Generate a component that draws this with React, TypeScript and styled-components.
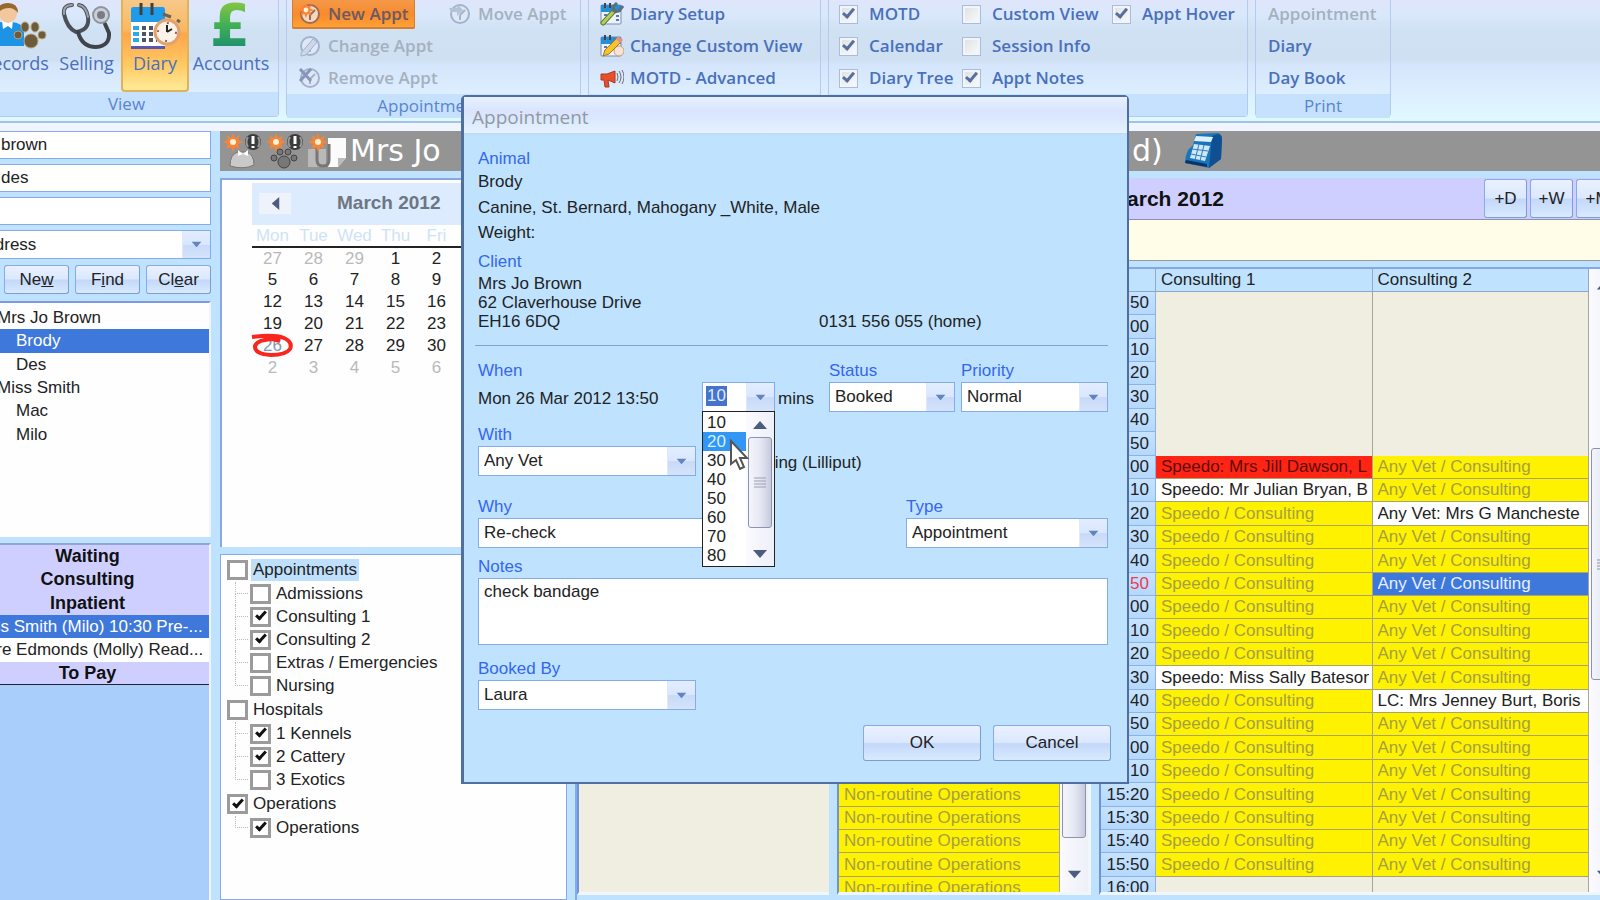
import React from 'react';
import styled, { createGlobalStyle, css } from 'styled-components';

const sans = `'Liberation Sans', Arial, sans-serif`;
const ribbonFont = `'Open Sans', 'Noto Sans', sans-serif`;

const color = {
  sky: '#bfe3ff',
  line: '#86aaf0',
  navy: '#4f6fa3',
  select: '#3f78db',
  lilac: '#cfcfff',
  beige: '#f0ede1',
  yellow: '#fff200',
  label: '#3566f0',
  ribbonText: '#4a70bc',
};

const GlobalStyle = createGlobalStyle`
  *, *::before, *::after { box-sizing: border-box; }
  html, body { margin: 0; overflow: hidden; }
  body { font: 17px/20px ${sans}; color: #222; background: ${color.sky}; }
  button, input, select, textarea { font: inherit; color: inherit; margin: 0; padding: 0; border: 0; background: none; }
  ul { list-style: none; margin: 0; padding: 0; }
  h1, h2, p { margin: 0; font: inherit; }
`;

/* Rows average a little over 23px: two rows in every five are one pixel taller. */
const rowRhythm = css`
  height: 23px;
  &:nth-child(5n + 2), &:nth-child(5n + 5) { height: 24px; }
`;

const Page = styled.div`
  position: relative;
  height: 100vh;
  display: flex;
  flex-direction: column;
  overflow: hidden;
`;

/* ---------- Ribbon ---------- */

const Ribbon = styled.header`
  display: flex;
  gap: 7px;
  height: 125px;
  margin-top: -2px;
  flex: none;
  font-family: ${ribbonFont};
  font-weight: 500;
  color: ${color.ribbonText};
  background: linear-gradient(#e0e5fc 0, #dae8fb 16px, #cfe1f3 34px, #cfe0f2 62px, #d5e5fb 66px, #dceeff 94px, #dffaff 122px);
  border-bottom: 2px solid #a3c2e8;
`;

const GroupBox = styled.section<{ $w: number; $lead?: boolean }>`
  width: ${p => p.$w}px;
  height: 119px;
  flex: none;
  display: flex;
  flex-direction: column;
  margin-left: ${p => (p.$lead ? '-40px' : '0')};
  border: 1px solid #b3cbec;
  border-top: 0;
  border-radius: 0 0 4px 4px;
  h2 { padding-left: ${p => (p.$lead ? '14px' : '0')}; }
`;

const GroupBody = styled.div<{ $cols: string; $pad: number }>`
  height: 96px;
  display: grid;
  grid-template-columns: ${p => p.$cols};
  grid-auto-rows: 32px;
  padding-left: ${p => p.$pad}px;
  align-items: center;
  justify-content: start;
  white-space: nowrap;
  font-weight: 600;
`;

const GroupCaption = styled.h2`
  flex: 1;
  background: #c5e1fd;
  text-align: center;
  line-height: 24px;
  color: #5b84d0;
`;

const BigButtons = styled.div`
  display: flex;
  height: 96px;
  padding-left: 17px;
`;

const BigButton = styled.button<{ $w: number; $active?: boolean }>`
  width: ${p => p.$w}px;
  display: flex;
  flex-direction: column;
  align-items: center;
  padding-top: 4px;
  font-size: 18px;
  line-height: 22px;
  border-radius: 0 0 4px 4px;
  ${p => p.$active && css`
    background: linear-gradient(#f7c98c 0, #fbb862 32px, #ffa54a 36px, #ffc862 66px, #fff0a0 96px);
    box-shadow: inset 0 0 0 2px #e0b25c;
  `}
  svg { margin-bottom: 2px; }
`;

const Command = styled.button<{ $hot?: boolean }>`
  display: flex;
  align-items: center;
  justify-self: start;
  gap: 6px;
  height: 30px;
  padding: 0 6px;
  border-radius: 2px;
  &:disabled { color: #a6b0bf; }
  ${p => p.$hot && css`
    color: #6b5a66;
    background: linear-gradient(#f49a4c, #f98a2c 50%, #ffa436);
    box-shadow: inset 0 -1px 0 1px #cf8035;
  `}
`;

const RibbonCheck = styled.label`
  display: flex;
  align-items: center;
  gap: 11px;
  input {
    appearance: none;
    width: 19px;
    height: 19px;
    border: 1px solid #a9bddb;
    background: linear-gradient(135deg, #dcdfe4, #fbfbfb);
    box-shadow: inset 0 0 0 2px #f1f4f8;
    display: grid;
    place-items: center;
  }
  input:checked::after {
    content: '';
    width: 7px;
    height: 12px;
    margin-top: -4px;
    border: solid #55709c;
    border-width: 0 3px 3px 0;
    transform: rotate(40deg);
  }
`;

/* ---------- Work area ---------- */

const Work = styled.main`
  flex: 1;
  min-height: 0;
  display: flex;
  gap: 9px;
  border-top: 8px solid #eff4ff;
`;

const Sidebar = styled.aside`
  width: 239px;
  flex: none;
  margin-left: -28px;
  display: flex;
  flex-direction: column;
`;

const SearchForm = styled.form`
  display: flex;
  flex-direction: column;
  gap: 5px;
  padding-bottom: 7px;
`;

const SearchInput = styled.input`
  height: 28px;
  padding-left: 28px;
  border: 1px solid ${color.line};
  background: #fff;
`;

const glossy = css`
  background: linear-gradient(#eaf1ff 0, #dbe8ff 48%, #c3d8f9 52%, #d9eaff 100%);
  border: 1px solid ${color.line};
  border-right-color: #7d9dcb;
  border-bottom-color: #7d9dcb;
  border-radius: 3px;
`;

const FormButtons = styled.div`
  display: flex;
  justify-content: flex-end;
  gap: 6px;
  padding-top: 1px;
`;

const FormButton = styled.button`
  ${glossy}
  width: 65px;
  height: 29px;
`;

const ClientList = styled.ul`
  height: 236px;
  flex: none;
  background: #fefeff;
  border-top: 2px solid #7b9bdc;
  border-right: 2px solid #eff4ff;
  padding-top: 3px;
`;

const ClientRow = styled.li<{ $pet?: boolean; $on?: boolean }>`
  ${rowRhythm}
  line-height: 23px;
  padding-left: ${p => (p.$pet ? 44 : 25)}px;
  ${p => p.$on && css`background: ${color.select}; color: #fff;`}
`;

const Queue = styled.ul`
  flex: 1;
  margin-top: 6px;
  border-top: 2px solid #92a6d8;
  border-right: 2px solid #eff4ff;
  background: #a9cefb;
  overflow: hidden;
`;

const QueueRow = styled.li<{ $kind: 'head' | 'on' | 'plain' }>`
  ${rowRhythm}
  line-height: 23px;
  white-space: nowrap;
  padding-left: 2px;
  &:last-child { border-bottom: 1px solid #223; }
  ${p => p.$kind === 'head' && css`
    background: ${color.lilac};
    color: #111;
    font-weight: bold;
    font-size: 18px;
    text-align: center;
    padding-left: 28px;
    padding-right: 34px;
  `}
  ${p => p.$kind === 'on' && css`background: ${color.select}; color: #fff;`}
  ${p => p.$kind === 'plain' && css`background: #fff; padding-left: 0; text-indent: -5px;`}
`;

const Content = styled.div`
  flex: 1;
  min-width: 0;
  margin-right: -17px;
  display: flex;
  flex-direction: column;
`;

const ClientBar = styled.div`
  height: 40px;
  flex: none;
  display: flex;
  align-items: center;
  padding-left: 4px;
  background: #949494;
  color: #fff;
  font-family: 'DejaVu Sans', Verdana, sans-serif;
  font-size: 30px;
  line-height: 42px;
  svg { flex: none; }
`;

const BarName = styled.span`
  width: 786px;
  padding-left: 4px;
`;

const BarEnd = styled.span`
  width: 52px;
`;

const Panes = styled.div`
  flex: 1;
  min-height: 0;
  display: flex;
  gap: 8px;
`;

const CalendarColumn = styled.div`
  width: 347px;
  flex: none;
  display: flex;
  flex-direction: column;
  gap: 7px;
  padding-top: 7px;
`;

const CalendarBox = styled.section`
  height: 369px;
  flex: none;
  background: #fefeff;
  border: 2px solid #8aa6e0;
  border-right-color: #eff4ff;
  border-bottom: 0;
  padding: 3px 0 0 30px;
`;

const MonthBar = styled.div`
  height: 42px;
  display: flex;
  align-items: center;
  background: #dcebfe;
  padding: 0 0 2px 7px;
  color: #6d7682;
  font-weight: bold;
  font-size: 19px;
`;

const PrevButton = styled.button`
  width: 32px;
  height: 21px;
  background: #eef2fb;
  display: grid;
  place-items: center;
  margin-right: 46px;
`;

const MonthTable = styled.table`
  table-layout: fixed;
  width: 287px;
  border-collapse: collapse;
  text-align: center;
  th { font-weight: normal; color: #cfe3f7; height: 22px; padding: 0; border-bottom: 2px solid #222; }
  td { height: 22px; padding: 0; }
`;

const Day = styled.td<{ $dim?: boolean }>`
  color: ${p => (p.$dim ? '#b9b9b9' : '#222')};
`;

const Ringed = styled.span`
  position: relative;
  color: #8299b5;
  svg { position: absolute; left: -12px; top: -3px; }
`;

const TreeBox = styled.section`
  flex: 1;
  background: #fefeff;
  border: 1px solid ${color.line};
  padding: 3px 0 0 6px;
`;

const TreeBranch = styled.ul`
  margin: 0 0 1px 8px;
`;

const TreeLeaf = styled.li`
  position: relative;
  padding-left: 15px;
  height: 23px;
  &::before {
    content: '';
    position: absolute;
    left: 0;
    top: 0;
    width: 13px;
    height: 12px;
    border: dotted #bbb;
    border-width: 0 0 1px 1px;
  }
  &:not(:last-child)::after {
    content: '';
    position: absolute;
    left: 0;
    top: 12px;
    bottom: 0;
    border-left: 1px dotted #bbb;
  }
`;

const TreeCheck = styled.label<{ $root?: boolean; $mark?: boolean }>`
  display: flex;
  align-items: center;
  gap: 3px;
  height: ${p => (p.$root ? 24 : 23)}px;
  input {
    appearance: none;
    width: 21px;
    height: 20px;
    border: 3px solid #9b9b9b;
    background: #fff;
    display: grid;
    place-items: center;
  }
  input:checked::after {
    content: '';
    width: 6px;
    height: 11px;
    margin-top: -4px;
    border: solid #111;
    border-width: 0 3px 3px 0;
    transform: rotate(42deg);
  }
  span { padding: 1px 2px; background: ${p => (p.$mark ? '#bfe0fc' : 'none')}; }
`;

const Diary = styled.section`
  flex: 1;
  min-width: 0;
  display: flex;
  flex-direction: column;
  padding-top: 7px;
  border-left: 2px solid ${color.line};
`;

const DateBar = styled.div`
  height: 42px;
  flex: none;
  display: flex;
  align-items: center;
  gap: 3px;
  background: ${color.lilac};
  border-bottom: 1px solid #8b8fb0;
  h2 { width: 904px; padding-right: 257px; text-align: right; font-weight: bold; font-size: 21px; color: #111; flex: none; }
`;

const StepButton = styled.button`
  ${glossy}
  width: 43px;
  height: 39px;
  flex: none;
`;

const Memo = styled.div`
  height: 41px;
  flex: none;
  background: #fffde8;
  border-bottom: 1px solid #999;
`;

const Books = styled.div`
  flex: 1;
  min-height: 0;
  display: flex;
  gap: 8px;
  padding: 6px 0 5px;
`;

const Book = styled.div<{ $w?: number; $edge?: boolean }>`
  flex: ${p => (p.$w ? `0 0 ${p.$w}px` : '1')};
  min-width: 0;
  display: flex;
  overflow: hidden;
  border-top: 2px solid #86a6e6;
  border-left: 2px solid #6f93da;
  border-bottom: 3px solid #eff6ff;
  border-right: ${p => (p.$edge ? '3px solid #eff6ff' : '0')};
  background: ${color.beige};
`;

const Sheet = styled.table`
  flex: 1 1 0;
  width: 100%;
  table-layout: fixed;
  border-collapse: separate;
  border-spacing: 0;
  align-self: flex-start;
  min-width: 0;
  tbody tr { ${rowRhythm} }
  td, th { padding: 0 3px 0 0; white-space: nowrap; overflow: hidden; }
  thead th { height: 23px; background: ${color.sky}; font-weight: normal; text-align: left; border-bottom: 1px solid #8ba7cc; border-right: 1px solid #93a9c6; }
  tbody th { padding-right: 6px; }
`;

const TimeHead = styled.th<{ $now?: boolean }>`
  width: 55px;
  font-weight: normal;
  text-align: right;
  background: linear-gradient(#c6e3ff, #b4d8fc);
  border-bottom: 1px solid #8db2e8;
  border-right: 1px solid #8db2e8;
  color: ${p => (p.$now ? '#f0384e' : '#222')};
`;

type SlotKind = 'closed' | 'free' | 'booked' | 'alert' | 'on';

const slotStyles: Record<SlotKind, ReturnType<typeof css>> = {
  closed: css`background: ${color.beige};`,
  free: css`background: ${color.yellow}; color: #a59f45; border-bottom: 1px solid #a8a56a;`,
  booked: css`background: #fff; border-bottom: 1px solid #a8a56a;`,
  alert: css`background: #ff2413; color: #5a0c08; border-bottom: 1px solid #a8a56a;`,
  on: css`background: ${color.select}; color: #e6efff; border-bottom: 1px solid #a8a56a;`,
};

const Slot = styled.td<{ $kind: SlotKind }>`
  ${p => slotStyles[p.$kind]}
  border-right: 1px solid #a3a699;
`;

const Clip = styled.div`
  margin-left: 5px;
  overflow: hidden;
  line-height: 22px;
  height: 22px;
`;

const ScrollTrack = styled.div`
  width: 28px;
  flex: none;
  display: flex;
  flex-direction: column;
  align-items: center;
  background: linear-gradient(90deg, #fafaff, #eef0f8);
  padding: 10px 0;
`;

const ScrollThumb = styled.div<{ $h: number; $top: number }>`
  width: 24px;
  height: ${p => p.$h}px;
  margin-top: ${p => p.$top}px;
  flex: none;
  border: 1px solid #8e93ad;
  border-radius: 3px;
  background: linear-gradient(90deg, #f4f5fb, #e6e9f4 50%, #c6cadd);
  display: grid;
  place-items: center;
`;

const ScrollGap = styled.div`
  flex: 1;
`;

/* ---------- Appointment window ---------- */

const Dialog = styled.div`
  position: absolute;
  left: 461px;
  top: 95px;
  width: 668px;
  border: 2px solid ${color.navy};
  border-left-width: 3px;
  border-radius: 5px 5px 0 0;
  background: ${color.sky};
`;

const DialogTitle = styled.h1`
  height: 38px;
  padding-left: 8px;
  line-height: 40px;
  font-family: ${ribbonFont};
  font-size: 19px;
  color: #9298a2;
  background: linear-gradient(#e9f1ff 0, #d9e4fe 14px, #dbeaff 24px, #e6f2ff 36px);
  border-bottom: 2px solid #c3dafa;
`;

const DialogBody = styled.form`
  padding: 12px 19px 21px 14px;
`;

const Line = styled.p<{ $tight?: boolean; $blue?: boolean }>`
  line-height: ${p => (p.$tight ? 19 : 24)}px;
  color: ${p => (p.$blue ? color.label : '#222')};
`;

const Block = styled.div`
  display: flex;
  flex-direction: column;
  gap: 1px;
  margin-bottom: 5px;
`;

const Split = styled.div`
  display: flex;
  > :first-child { width: 341px; }
`;

const Rule = styled.hr`
  margin: 14px 0 14px -3px;
  border: 0;
  border-top: 1px solid #7f9fe0;
`;

const Row = styled.div<{ $after: number }>`
  display: flex;
  align-items: flex-end;
  gap: 6px;
  margin-bottom: ${p => p.$after}px;
`;

const Field = styled.div<{ $w?: number }>`
  display: flex;
  flex-direction: column;
  width: ${p => (p.$w ? `${p.$w}px` : '100%')};
  flex: ${p => (p.$w ? 'none' : '1')};
  label, > p { line-height: 22px; color: ${color.label}; }
`;

const Text = styled.span<{ $w?: number; $indent?: number }>`
  padding-top: 3px;
  line-height: 27px;
  width: ${p => (p.$w ? `${p.$w}px` : 'auto')};
  margin-left: ${p => p.$indent ?? 0}px;
  white-space: nowrap;
`;

const Spacer = styled.span`
  flex: 1;
`;

const ComboFrame = styled.div`
  position: relative;
  display: grid;
  height: 30px;
  background: #fff;
  border: 1px solid ${color.line};
  select { grid-area: 1 / 1; appearance: none; width: 100%; padding-left: 5px; outline: none; }
`;

const ComboArrow = styled.span`
  grid-area: 1 / 1;
  justify-self: end;
  width: 28px;
  display: grid;
  place-items: center;
  pointer-events: none;
  background: linear-gradient(#e3edff 0, #d9e6ff 50%, #c8daf8 52%, #d5e3fb 100%);
  border-left: 1px solid #dfe9fb;
`;

const SidebarCombo = styled(ComboFrame)`
  height: 29px;
  select { padding-left: 1px; }
`;

const MinutesInput = styled.input`
  grid-area: 1 / 1;
  align-self: start;
  width: 21px;
  height: 20px;
  margin: 3px 0 0 3px;
  padding-left: 1px;
  background: #4672cc;
  color: #dfe9ff;
`;

const MinutesList = styled.div`
  position: absolute;
  left: -1px;
  top: 28px;
  width: 73px;
  display: flex;
  border: 1px solid #222;
  background: #fff;
  z-index: 2;
`;

const Options = styled.ul`
  flex: 1;
  padding: 1px 0;
  li { height: 19px; line-height: 19px; padding-left: 4px; }
  li[aria-selected='true'] { background: #3296f5; color: #d5f0ff; }
`;

const ListTrack = styled(ScrollTrack)`
  padding: 5px 0 4px;
`;

const Pointer = styled.svg`
  position: absolute;
  left: 26px;
  top: 27px;
`;

const TextBox = styled.input`
  height: 30px;
  padding-left: 5px;
  border: 1px solid ${color.line};
  background: #fff;
`;

const NotesBox = styled.textarea`
  height: 67px;
  padding: 3px 5px;
  border: 1px solid ${color.line};
  background: #fff;
  resize: none;
  display: block;
`;

const Actions = styled.div`
  display: flex;
  justify-content: flex-end;
  gap: 12px;
  margin: 15px -3px 0 0;
`;

const ActionButton = styled.button`
  ${glossy}
  width: 118px;
  height: 36px;
`;

/* ---------- Icons ---------- */

const Triangle = ({ dir, size = 16, fill = '#4c5b80' }: { dir: 'up' | 'down' | 'left'; size?: number; fill?: string }) => (
  <svg width={size} height={size} viewBox="0 0 16 16">
    <path fill={fill} d={dir === 'up' ? 'M1 12 8 4l7 8z' : dir === 'down' ? 'M1 4h14l-7 8z' : 'M12 1v14L4 8z'} />
  </svg>
);

const PersonPaw = () => (
  <svg width="66" height="48" viewBox="0 0 66 48">
    <path d="M8 44V28q1-7 12-8h10q11 1 12 9v15z" fill="#1d93e6" />
    <path d="M20 18h11l-1 9-4-3-5 3z" fill="#fff" />
    <ellipse cx="26" cy="11" rx="9" ry="10" fill="#f3c79d" />
    <path d="M16 11Q15 1 26 1q10 0 10 10-4-5-9-5-7 0-11 5z" fill="#96692f" />
    <g fill="#6e5b3c" stroke="#b5a27c" strokeWidth="1">
      <ellipse cx="49" cy="39" rx="7" ry="7" /><ellipse cx="36" cy="33" rx="4" ry="4" />
      <ellipse cx="43" cy="25" rx="4" ry="5" /><ellipse cx="53" cy="25" rx="4" ry="5" /><ellipse cx="60" cy="33" rx="4" ry="4" />
    </g>
  </svg>
);

const Stethoscope = () => (
  <svg width="54" height="48" viewBox="0 0 54 48" fill="none" strokeLinecap="round">
    <path d="M12 3Q3 3 4 12q3 14 12 18Q30 28 28 15 26 4 19 3" stroke="#4b5058" strokeWidth="4" />
    <path d="M12 3Q3 3 4 12M19 3q7 1 9 12" stroke="#9aa1ab" strokeWidth="2" />
    <path d="M18 30q4 15 18 15 14-1 13-14l-4-9" stroke="#3f444c" strokeWidth="4" />
    <circle cx="41" cy="13" r="8" fill="#ccd0d6" stroke="#8e949d" strokeWidth="2" />
    <circle cx="41" cy="13" r="4" fill="#777d86" />
  </svg>
);

const DiaryIcon = () => (
  <svg width="54" height="48" viewBox="0 0 54 48">
    <rect x="3" y="5" width="34" height="41" rx="2" fill="#fff" />
    <path d="M3 20V7q0-2 2-2h30q2 0 2 2v13z" fill="#1e9cea" />
    <path d="M3 44h34v3H3z" fill="#5457b4" />
    <path d="M13 1v12M24 1v12" stroke="#43403c" strokeWidth="3" />
    <path d="M5 26h6M5 32h6M5 38h6" stroke="#29a8ee" strokeWidth="4" />
    <path d="M14 26h15M14 32h13M14 38h15" stroke="#4b5566" strokeWidth="4" strokeDasharray="4 3" />
    <path d="m35 12 8 3M49 18l3 2" stroke="#6a625c" strokeWidth="3" />
    <circle cx="39" cy="30" r="12" fill="#fbf3ea" stroke="#e0a271" strokeWidth="3" />
    <path d="M39 30v-7M39 30l5-3" stroke="#222" strokeWidth="2" />
    <circle cx="39" cy="30" r="9" fill="none" stroke="#b35a3c" strokeWidth="2" strokeDasharray="2 12" />
  </svg>
);

const PoundIcon = () => (
  <svg width="54" height="48" viewBox="0 0 54 48">
    <defs>
      <linearGradient id="pound" x1="0" y1="0" x2="0" y2="1">
        <stop offset="0" stopColor="#a2d13a" /><stop offset=".5" stopColor="#3fae55" /><stop offset="1" stopColor="#0d7f7b" />
      </linearGradient>
    </defs>
    <text x="26" y="44" textAnchor="middle" fontFamily="DejaVu Sans" fontWeight="bold" fontSize="58" fill="url(#pound)">£</text>
  </svg>
);

const Star = ({ x, y, s = 1 }: { x: number; y: number; s?: number }) => (
  <g transform={`translate(${x} ${y}) scale(${s})`}>
    <path d="m0-9 2 5 5-3-2 5 5 2-5 2 2 5-5-2-2 5-2-5-5 2 2-5-5-2 5-2-2-5 5 3z" fill="#f98434" />
    <circle r="3" fill="#fff0d8" />
  </g>
);

const ApptIcon = ({ kind }: { kind: 'new' | 'move' | 'change' | 'remove' }) => {
  const hot = kind === 'new';
  const ink = hot ? '#a06c4d' : '#a3b2cd';
  return (
    <svg width="24" height="24" viewBox="0 0 24 24" fill="none">
      <circle cx="12" cy="12" r="9" fill={hot ? '#f5d8c2' : '#dfe8f5'} stroke={ink} strokeWidth="2" />
      <path d="m12 13 5-5M12 13v5" stroke={ink} strokeWidth="2" />
      {kind === 'new' && <Star x={8} y={8} s={0.8} />}
      {kind === 'move' && <path d="M1 6h8V2l6 6-6 6v-4H3z" fill="#b6c2d8" />}
      {kind === 'change' && <path d="m3 19 12-14 4 3L8 21l-5 1z" fill="#ccd7ea" stroke={ink} />}
      {kind === 'remove' && <path d="m2 3 11 12M13 3 2 15" stroke="#8696b8" strokeWidth="3" />}
    </svg>
  );
};

const SetupIcon = ({ pencil }: { pencil?: boolean }) => (
  <svg width="24" height="24" viewBox="0 0 24 24" fill="none">
    <rect x="1" y="3" width="20" height="19" rx="1" fill="#eef3fb" stroke="#7d8ab8" />
    <path d="M1 3h20v7H1z" fill="#2390d8" />
    <path d="M5 1v5M10 1v5" stroke="#444" strokeWidth="2" />
    <path d="M4 13h3M4 17h3M16 14h3M16 18h3" stroke="#5d78b6" strokeWidth="2" />
    {pencil ? (
      <>
        <circle cx="19" cy="17" r="5" fill="#f3e4d8" stroke="#d39a78" />
        <path d="m3 22 2-6L17 4l4 4L9 20z" fill="#f5c32c" stroke="#a87922" />
        <path d="m16 5 2-3 5 4-3 3z" fill="#e98b8f" />
      </>
    ) : (
      <>
        <path d="m3 21 11-12" stroke="#5d7a34" strokeWidth="5" strokeLinecap="round" />
        <path d="m3 21 11-12" stroke="#b6cf5d" strokeWidth="3" strokeLinecap="round" />
        <path d="m14 10 5-1 4-5M14 10l-1-5 4-4" stroke="#5f6f78" strokeWidth="3" />
      </>
    )}
  </svg>
);

const Megaphone = () => (
  <svg width="24" height="24" viewBox="0 0 24 24" fill="none">
    <path d="M1 8h6l8-3v12l-7-3 1 7H5l-1-7H1z" fill="#e8502c" stroke="#a83a22" />
    <path d="M17 7q2 4 0 8M19 5q4 6 0 12M22 4q4 7 0 14" stroke="#6b6b6b" strokeWidth="1" />
  </svg>
);

const Alert = ({ x }: { x: number }) => (
  <g>
    <circle cx={x} cy="10" r="8" fill="#3c3c3c" />
    <path d={`M${x - 5} 5q-3 5 0 10M${x + 5} 5q3 5 0 10`} stroke="#999" strokeWidth="2" fill="none" />
    <path d={`M${x} 4v8M${x} 14v2`} stroke="#fff" strokeWidth="3" />
  </g>
);

const BarIcons = () => (
  <svg width="122" height="38" viewBox="0 0 122 38">
    <path d="M6 34q0-12 8-14h8q8 2 8 13-10 5-24 1z" fill="#c9c9c9" stroke="#777" />
    <path d="m14 18 5 4 5-4v6l-5-2-5 2z" fill="#fff" />
    <Star x={9} y={10} /><Alert x={29} />
    <g fill="#777" stroke="#444"><circle cx="60" cy="30" r="6" /><circle cx="50" cy="26" r="3" /><circle cx="56" cy="20" r="3" /><circle cx="64" cy="20" r="3" /><circle cx="70" cy="26" r="3" /></g>
    <Star x={52} y={10} /><Alert x={71} />
    <path d="M84 17h18v18H84z" fill="#b9b9b9" />
    <path d="M104 6h18v20l-8 9h-10z" fill="#fbfbfb" /><path d="M122 26h-8v9z" fill="#bbb" />
    <path d="M93 16v12q0 6 6 6t6-6V12" stroke="#777" strokeWidth="3" fill="none" />
    <Star x={94} y={10} />
  </svg>
);

const Till = () => (
  <svg width="40" height="36" viewBox="0 0 40 36">
    <path d="m12 1 22-1q4 1 4 5l-1 21-12 9-24-5q0-7 3-13l5-5z" fill="#1976bb" />
    <path d="m28 3 6-2q4 1 4 5l-1 20-12 9z" fill="#0f4f92" />
    <path d="m12 3 17 1-2 5-17-1z" fill="#dff1fb" />
    <path d="m10 11 16 2-5 15-15-3z" fill="#cfe8f7" />
    <path d="m8 16 16 2M7 21l15 3M15 11l-4 16M20 12l-4 16" stroke="#2f7fc0" strokeWidth="1" />
    <path d="m2 27 21 4v3L1 30z" fill="#0a3466" />
  </svg>
);

/* ---------- Data ---------- */

const week = ['Mon', 'Tue', 'Wed', 'Thu', 'Fri'];
const days = [
  [27, 28, 29, 1, 2],
  [5, 6, 7, 8, 9],
  [12, 13, 14, 15, 16],
  [19, 20, 21, 22, 23],
  [26, 27, 28, 29, 30],
  [2, 3, 4, 5, 6],
];

const tree: { name: string; on?: boolean; mark?: boolean; items: [string, boolean][] }[] = [
  { name: 'Appointments', mark: true, items: [['Admissions', false], ['Consulting 1', true], ['Consulting 2', true], ['Extras / Emergencies', false], ['Nursing', false]] },
  { name: 'Hospitals', items: [['1 Kennels', true], ['2 Cattery', true], ['3 Exotics', false]] },
  { name: 'Operations', on: true, items: [['Operations', true]] },
];

const toTime = (i: number) => {
  const m = 11 * 60 + 50 + i * 10;
  return `${Math.floor(m / 60)}:${String(m % 60).padStart(2, '0')}`;
};

const special: Record<string, [SlotKind, string]> = {
  '13:00/1': ['alert', 'Speedo: Mrs Jill Dawson, L'],
  '13:10/1': ['booked', 'Speedo: Mr Julian Bryan, B'],
  '13:20/2': ['booked', 'Any Vet: Mrs G Mancheste'],
  '13:50/2': ['on', 'Any Vet / Consulting'],
  '14:30/1': ['booked', 'Speedo: Miss Sally Bateson'],
  '14:40/2': ['booked', 'LC: Mrs Jenney Burt, Boris'],
};

const slotFor = (i: number, room: 1 | 2): [SlotKind, string] => {
  if (i < 7 || i > 24) return ['closed', ''];
  return special[`${toTime(i)}/${room}`] ?? ['free', room === 1 ? 'Speedo / Consulting' : 'Any Vet / Consulting'];
};

/* ---------- Parts ---------- */

const Combo = ({ id, value }: { id: string; value: string }) => (
  <ComboFrame>
    <select id={id} defaultValue={value}><option>{value}</option></select>
    <ComboArrow><Triangle dir="down" size={11} fill="#6285bd" /></ComboArrow>
  </ComboFrame>
);

const Check = ({ text, on }: { text: string; on?: boolean }) => (
  <RibbonCheck><input type="checkbox" defaultChecked={on} />{text}</RibbonCheck>
);

const RibbonBar = () => (
  <Ribbon>
    <GroupBox $w={319} $lead>
      <BigButtons>
        <BigButton $w={74}><PersonPaw />Records</BigButton>
        <BigButton $w={69}><Stethoscope />Selling</BigButton>
        <BigButton $w={68} $active><DiaryIcon />Diary</BigButton>
        <BigButton $w={84}><PoundIcon />Accounts</BigButton>
      </BigButtons>
      <GroupCaption>View</GroupCaption>
    </GroupBox>
    <GroupBox $w={295}>
      <GroupBody $cols="150px auto" $pad={5}>
        <Command $hot><ApptIcon kind="new" />New Appt</Command>
        <Command disabled><ApptIcon kind="move" />Move Appt</Command>
        <Command disabled><ApptIcon kind="change" />Change Appt</Command>
        <span />
        <Command disabled><ApptIcon kind="remove" />Remove Appt</Command>
      </GroupBody>
      <GroupCaption>Appointments</GroupCaption>
    </GroupBox>
    <GroupBox $w={233}>
      <GroupBody $cols="auto" $pad={5}>
        <Command><SetupIcon />Diary Setup</Command>
        <Command><SetupIcon pencil />Change Custom View</Command>
        <Command><Megaphone />MOTD - Advanced</Command>
      </GroupBody>
      <GroupCaption />
    </GroupBox>
    <GroupBox $w={420}>
      <GroupBody $cols="123px 150px auto" $pad={10}>
        <Check text="MOTD" on /><Check text="Custom View" /><Check text="Appt Hover" on />
        <Check text="Calendar" on /><Check text="Session Info" /><span />
        <Check text="Diary Tree" on /><Check text="Appt Notes" on />
      </GroupBody>
      <GroupCaption />
    </GroupBox>
    <GroupBox $w={136}>
      <GroupBody $cols="auto" $pad={6}>
        <Command disabled>Appointment</Command>
        <Command>Diary</Command>
        <Command>Day Book</Command>
      </GroupBody>
      <GroupCaption>Print</GroupCaption>
    </GroupBox>
  </Ribbon>
);

const SearchPane = () => (
  <Sidebar>
    <SearchForm>
      <SearchInput aria-label="Surname" defaultValue="brown" />
      <SearchInput aria-label="Animal name" defaultValue="des" />
      <SearchInput aria-label="Postcode" />
      <SidebarCombo>
        <select aria-label="Search field" defaultValue="Address"><option>Address</option></select>
        <ComboArrow><Triangle dir="down" size={11} fill="#6285bd" /></ComboArrow>
      </SidebarCombo>
      <FormButtons>
        <FormButton type="button">Ne<u>w</u></FormButton>
        <FormButton type="button">F<u>i</u>nd</FormButton>
        <FormButton type="button">Cl<u>e</u>ar</FormButton>
      </FormButtons>
    </SearchForm>
    <ClientList>
      <ClientRow>Mrs Jo Brown</ClientRow>
      <ClientRow $pet $on>Brody</ClientRow>
      <ClientRow $pet>Des</ClientRow>
      <ClientRow>Miss Smith</ClientRow>
      <ClientRow $pet>Mac</ClientRow>
      <ClientRow $pet>Milo</ClientRow>
    </ClientList>
    <Queue>
      <QueueRow $kind="head">Waiting</QueueRow>
      <QueueRow $kind="head">Consulting</QueueRow>
      <QueueRow $kind="head">Inpatient</QueueRow>
      <QueueRow $kind="on">Miss Smith (Milo) 10:30 Pre-...</QueueRow>
      <QueueRow $kind="plain">Claire Edmonds (Molly) Read...</QueueRow>
      <QueueRow $kind="head">To Pay</QueueRow>
    </Queue>
  </Sidebar>
);

const Calendar = () => (
  <CalendarBox>
    <MonthBar>
      <PrevButton aria-label="Previous month"><Triangle dir="left" size={15} /></PrevButton>
      March 2012
    </MonthBar>
    <MonthTable>
      <thead><tr>{week.map(d => <th key={d}>{d}</th>)}<th /><th /></tr></thead>
      <tbody>
        {days.map((row, r) => (
          <tr key={r}>
            {row.map((d, c) => (
              <Day key={c} $dim={(r === 0 && d > 20) || r === 5}>
                {r === 4 && c === 0 ? (
                  <Ringed>
                    {d}
                    <svg width="44" height="24" viewBox="0 0 44 24" fill="none">
                      <path d="M1 4q22-3 32 1 9 4 6 11-4 6-19 6Q3 21 4 13q2-6 17-7l8 2" stroke="#f8261c" strokeWidth="4" />
                    </svg>
                  </Ringed>
                ) : d}
              </Day>
            ))}
          </tr>
        ))}
      </tbody>
    </MonthTable>
  </CalendarBox>
);

const DiaryTree = () => (
  <TreeBox>
    {tree.map(branch => (
      <React.Fragment key={branch.name}>
        <TreeCheck $root $mark={branch.mark}>
          <input type="checkbox" defaultChecked={branch.on} /><span>{branch.name}</span>
        </TreeCheck>
        <TreeBranch>
          {branch.items.map(([name, on]) => (
            <TreeLeaf key={name}>
              <TreeCheck><input type="checkbox" defaultChecked={on} /><span>{name}</span></TreeCheck>
            </TreeLeaf>
          ))}
        </TreeBranch>
      </React.Fragment>
    ))}
  </TreeBox>
);

const OperationsBook = () => (
  <Book $w={254} $edge>
    <Sheet>
      <thead><tr><th /></tr></thead>
      <tbody>
        {Array.from({ length: 26 }, (_, i) => (
          <tr key={i}>
            <Slot $kind={i < 21 ? 'closed' : 'free'}><Clip>{i < 21 ? '' : 'Non-routine Operations'}</Clip></Slot>
          </tr>
        ))}
      </tbody>
    </Sheet>
    <ScrollTrack>
      <ScrollThumb $h={250} $top={309} />
      <ScrollGap />
      <Triangle dir="down" size={15} />
    </ScrollTrack>
  </Book>
);

const ConsultingBook = () => (
  <Book>
    <Sheet>
      <thead><tr><TimeHead as="th" /><th><Clip>Consulting 1</Clip></th><th><Clip>Consulting 2</Clip></th></tr></thead>
      <tbody>
        {Array.from({ length: 26 }, (_, i) => (
          <tr key={i}>
            <TimeHead scope="row" $now={toTime(i) === '13:50'}>{toTime(i)}</TimeHead>
            {([1, 2] as const).map(room => {
              const [kind, text] = slotFor(i, room);
              return <Slot key={room} $kind={kind}><Clip>{text}</Clip></Slot>;
            })}
          </tr>
        ))}
      </tbody>
    </Sheet>
    <ScrollTrack>
      <Triangle dir="up" size={14} />
      <ScrollThumb $h={232} $top={155}>
        <svg width="12" height="11" viewBox="0 0 12 11"><path d="M0 1h12M0 4h12M0 7h12M0 10h12" stroke="#8a90a8" /></svg>
      </ScrollThumb>
      <ScrollGap />
      <Triangle dir="down" size={15} />
    </ScrollTrack>
  </Book>
);

const AppointmentDialog = () => (
  <Dialog role="dialog" aria-labelledby="appt-title">
    <DialogTitle id="appt-title">Appointment</DialogTitle>
    <DialogBody>
      <Block>
        <Line $blue>Animal</Line>
        <Line $tight>Brody</Line>
      </Block>
      <Block>
        <Line>Canine, St. Bernard, Mahogany _White, Male</Line>
        <Line>Weight:</Line>
      </Block>
      <Line $blue>Client</Line>
      <Line $tight>Mrs Jo Brown</Line>
      <Line $tight>62 Claverhouse Drive</Line>
      <Split>
        <Line $tight>EH16 6DQ</Line>
        <Line $tight>0131 556 055 (home)</Line>
      </Split>
      <Rule />
      <Row $after={12}>
        <Field $w={218}><p>When</p><Text>Mon 26 Mar 2012 13:50</Text></Field>
        <Field $w={73}>
          <ComboFrame>
            <MinutesInput aria-label="Duration in minutes" defaultValue="10" />
            <ComboArrow><Triangle dir="down" size={11} fill="#6285bd" /></ComboArrow>
            <MinutesList>
              <Options role="listbox" aria-label="Duration">
                {[10, 20, 30, 40, 50, 60, 70, 80].map(n => (
                  <li key={n} role="option" aria-selected={n === 20}>{n}</li>
                ))}
              </Options>
              <ListTrack>
                <Triangle dir="up" size={16} />
                <ScrollThumb $h={91} $top={4}>
                  <svg width="12" height="11" viewBox="0 0 12 11"><path d="M0 1h12M0 4h12M0 7h12M0 10h12" stroke="#9a9fb0" /></svg>
                </ScrollThumb>
                <ScrollGap />
                <Triangle dir="down" size={16} />
              </ListTrack>
              <Pointer width="20" height="32" viewBox="0 0 20 32">
                <path d="M2 2v23l5-4 4 9 4-2-4-9h7z" fill="#fff" stroke="#555" strokeWidth="2" />
              </Pointer>
            </MinutesList>
          </ComboFrame>
        </Field>
        <Text $w={45} $indent={-3}>mins</Text>
        <Field $w={126}><label htmlFor="status">Status</label><Combo id="status" value="Booked" /></Field>
        <Field $w={147}><label htmlFor="priority">Priority</label><Combo id="priority" value="Normal" /></Field>
      </Row>
      <Row $after={20}>
        <Field $w={218}><label htmlFor="with">With</label><Combo id="with" value="Any Vet" /></Field>
        <Text $indent={15}>Consulting (Lilliput)</Text>
      </Row>
      <Row $after={8}>
        <Field $w={291}><label htmlFor="why">Why</label><TextBox id="why" defaultValue="Re-check" /></Field>
        <Spacer />
        <Field $w={202}><label htmlFor="type">Type</label><Combo id="type" value="Appointment" /></Field>
      </Row>
      <Row $after={13}>
        <Field><label htmlFor="notes">Notes</label><NotesBox id="notes" defaultValue="check bandage" /></Field>
      </Row>
      <Row $after={0}>
        <Field $w={218}><label htmlFor="by">Booked By</label><Combo id="by" value="Laura" /></Field>
      </Row>
      <Actions>
        <ActionButton type="button">OK</ActionButton>
        <ActionButton type="button">Cancel</ActionButton>
      </Actions>
    </DialogBody>
  </Dialog>
);

export default function App() {
  return (
    <Page>
      <GlobalStyle />
      <RibbonBar />
      <Work>
        <SearchPane />
        <Content>
          <ClientBar>
            <BarIcons />
            <BarName>Mrs Jo</BarName>
            <BarEnd>d)</BarEnd>
            <Till />
          </ClientBar>
          <Panes>
            <CalendarColumn>
              <Calendar />
              <DiaryTree />
            </CalendarColumn>
            <Diary>
              <DateBar>
                <h2>Monday 26 March 2012</h2>
                <StepButton>+D</StepButton>
                <StepButton>+W</StepButton>
                <StepButton>+M</StepButton>
              </DateBar>
              <Memo />
              <Books>
                <Book $w={252} />
                <OperationsBook />
                <ConsultingBook />
              </Books>
            </Diary>
          </Panes>
        </Content>
      </Work>
      <AppointmentDialog />
    </Page>
  );
}
